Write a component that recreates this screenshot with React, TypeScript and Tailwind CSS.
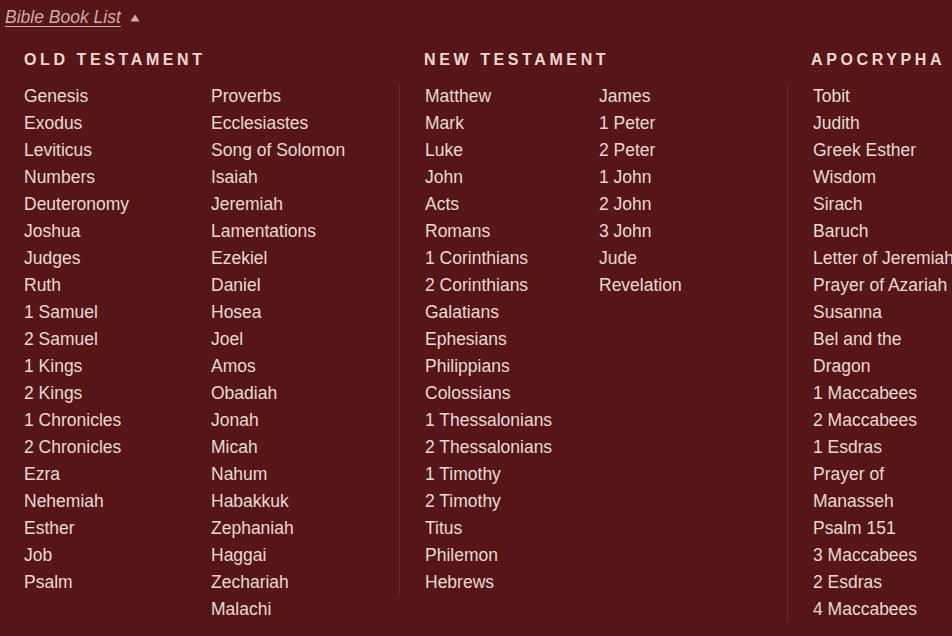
import React from "react";

const ot1 = ["Genesis","Exodus","Leviticus","Numbers","Deuteronomy","Joshua","Judges","Ruth","1 Samuel","2 Samuel","1 Kings","2 Kings","1 Chronicles","2 Chronicles","Ezra","Nehemiah","Esther","Job","Psalm"];
const ot2 = ["Proverbs","Ecclesiastes","Song of Solomon","Isaiah","Jeremiah","Lamentations","Ezekiel","Daniel","Hosea","Joel","Amos","Obadiah","Jonah","Micah","Nahum","Habakkuk","Zephaniah","Haggai","Zechariah","Malachi"];
const nt1 = ["Matthew","Mark","Luke","John","Acts","Romans","1 Corinthians","2 Corinthians","Galatians","Ephesians","Philippians","Colossians","1 Thessalonians","2 Thessalonians","1 Timothy","2 Timothy","Titus","Philemon","Hebrews"];
const nt2 = ["James","1 Peter","2 Peter","1 John","2 John","3 John","Jude","Revelation"];
const apo = ["Tobit","Judith","Greek Esther","Wisdom","Sirach","Baruch","Letter of Jeremiah","Prayer of Azariah","Susanna","Bel and the Dragon","1 Maccabees","2 Maccabees","1 Esdras","Prayer of Manasseh","Psalm 151","3 Maccabees","2 Esdras","4 Maccabees"];

function Col({ items, className = "" }: { items: string[]; className?: string }) {
  return (
    <ul className={"flex flex-col " + className}>
      {items.map((b) => (
        <li key={b} className="leading-[27px] text-[17.5px] text-[#e8d9d5]">
          {b}
        </li>
      ))}
    </ul>
  );
}

function Heading({ children, className = "" }: { children: React.ReactNode; className?: string }) {
  return (
    <h2 className={"h-5 leading-5 mb-[12.5px] text-[16px] font-bold tracking-[3.6px] text-[#f0d7d6] whitespace-nowrap " + className}>
      {children}
    </h2>
  );
}

export default function App() {
  return (
    <div
      className="w-[952px] h-[636px] overflow-hidden bg-[#561617]"
      style={{ fontFamily: '"Liberation Sans", Arial, sans-serif' }}
    >
      <div className="pt-[7px] pl-[5px] h-[27px] flex items-center gap-[9px] leading-5">
        <span className="italic text-[17.5px] text-[#cfaaa6] underline underline-offset-[3px] decoration-1">
          Bible Book List
        </span>
        <svg width="10" height="8" viewBox="0 0 10 8" className="mt-[1px]">
          <polygon points="5,0.5 9.6,7.5 0.4,7.5" fill="#cfaaa6" />
        </svg>
      </div>
      <div className="flex mt-[23px]">
        <section className="w-[399px] shrink-0 pl-6">
          <Heading>OLD TESTAMENT</Heading>
          <div className="grid grid-cols-[187px_auto]">
            <Col items={ot1} />
            <Col items={ot2} />
          </div>
        </section>
        <section className="w-[388px] shrink-0">
          <Heading className="pl-[25px]">NEW TESTAMENT</Heading>
          <div className="grid grid-cols-[174px_auto] border-l border-[#6a2526] pl-[25px] self-start">
            <Col items={nt1} />
            <Col items={nt2} />
          </div>
        </section>
        <section className="shrink-0">
          <Heading className="pl-6">APOCRYPHA</Heading>
          <div className="border-l border-[#6a2526] pl-[25px]">
            <Col items={apo} className="w-[145px]" />
          </div>
        </section>
      </div>
    </div>
  );
}
